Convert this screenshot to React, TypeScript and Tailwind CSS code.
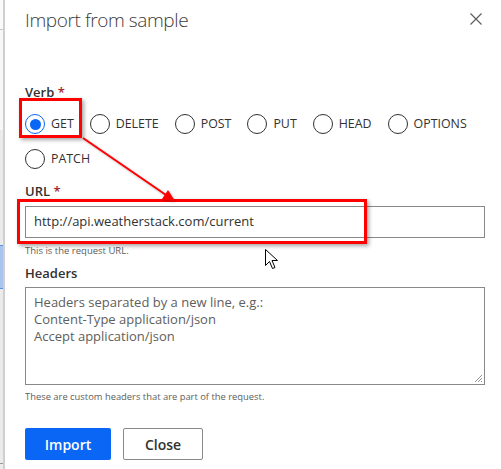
import React from "react";

const font = { fontFamily: '"Open Sans", "Noto Sans", "Liberation Sans", sans-serif' };

function Radio({ label, checked }: { label: string; checked?: boolean }) {
  return (
    <div className="flex items-center gap-[6px] h-[20px]">
      <span
        className={
          "w-[20px] h-[20px] rounded-full border flex items-center justify-center bg-white " +
          (checked ? "border-[#0a66f5]" : "border-[#323130]")
        }
      >
        {checked && <span className="w-[11px] h-[11px] rounded-full bg-[#0a66f5]" />}
      </span>
      <span className="text-[12.4px] leading-[20px] text-[#323130]">{label}</span>
    </div>
  );
}

export default function App() {
  return (
    <div className="relative w-[501px] h-[469px] flex bg-white overflow-hidden" style={font}>
      {/* background page strip */}
      <div className="w-[3px] flex flex-col shrink-0">
        <div className="h-[29px] bg-[#fafafa]" />
        <div className="h-[1px] bg-[#c8c8c8]" />
        <div className="h-[100px] bg-[#f7f7f7]" />
        <div className="h-[115px] bg-[#ebebeb]" />
        <div className="h-[44px] bg-[#a9c4ee] border-t border-b border-[#5a8fe0]" />
        <div className="flex-1 bg-[#ebebeb]" />
        <div className="h-[1px] bg-[#9a9a9a]" />
        <div className="h-[5px] bg-[#ebebeb]" />
      </div>
      <div className="w-[2px] shrink-0 bg-[#cfcfcf]" />

      {/* dialog */}
      <div className="flex-1 flex flex-col pl-[20px] pr-[16px]">
        <div className="flex items-start justify-between mt-[6px]">
          <h1 className="text-[19px] leading-[28px] font-light tracking-[-0.4px] text-[#3b3a39]">
            Import from sample
          </h1>
          <svg width="12" height="12" viewBox="0 0 12 12" className="mt-[7px] mr-[3px]">
            <path d="M0.5 0.5 L11.5 11.5 M11.5 0.5 L0.5 11.5" stroke="#605e5c" strokeWidth="1.2" />
          </svg>
        </div>

        <div className="mt-[48px] text-[13px] leading-[20px] font-semibold text-[#323130]">
          Verb <span className="text-[#a4262c]">*</span>
        </div>
        <div className="mt-[12px] flex flex-wrap gap-x-[16px] gap-y-[15px]">
          <Radio label="GET" checked />
          <Radio label="DELETE" />
          <Radio label="POST" />
          <Radio label="PUT" />
          <Radio label="HEAD" />
          <Radio label="OPTIONS" />
          <Radio label="PATCH" />
        </div>

        <div className="mt-[12px] text-[13px] leading-[20px] font-semibold text-[#323130]">
          URL <span className="text-[#a4262c]">*</span>
        </div>
        <div className="mt-[5px] h-[32px] border border-[#8a8886] flex items-center px-[8px] text-[13px] text-[#323130]">
          http://api.weatherstack.com/current
        </div>
        <div className="mt-[6px] text-[9.5px] leading-[14px] text-[#605e5c]">This is the request URL.</div>

        <div className="mt-[5px] text-[13px] leading-[20px] font-semibold text-[#323130]">Headers</div>
        <div className="relative mt-[4px] h-[98px] border border-[#8a8886] px-[8px] pt-[6px] text-[13px] leading-[17px] text-[#605e5c]">
          <div>Headers separated by a new line, e.g.:</div>
          <div>Content-Type application/json</div>
          <div>Accept application/json</div>
          <svg width="9" height="9" viewBox="0 0 9 9" className="absolute right-[1px] bottom-[1px]">
            <path d="M8 1 L1 8 M8 4 L4 8 M8 7 L7 8" stroke="#767676" strokeWidth="0.8" />
          </svg>
        </div>
        <div className="mt-[5px] text-[9.4px] leading-[14px] text-[#605e5c]">
          These are custom headers that are part of the request.
        </div>

        <div className="mt-[24px] flex gap-[12px]">
          <button className="w-[86px] h-[32px] rounded-[2px] bg-[#0a66f5] text-white text-[14px] font-semibold">
            Import
          </button>
          <button className="w-[80px] h-[32px] rounded-[2px] border border-[#8a8886] bg-white text-[#323130] text-[14px] font-semibold">
            Close
          </button>
        </div>
      </div>

      {/* annotations */}
      <div className="absolute left-[19px] top-[98px] w-[63px] h-[40px] border-[3px] border-[#ff0000] shadow-[2px_2px_4px_rgba(0,0,0,0.35)]" />
      <div className="absolute left-[17px] top-[199px] w-[350px] h-[45px] border-[3px] border-[#ff0000] shadow-[2px_2px_4px_rgba(0,0,0,0.35)]" />
      <svg className="absolute left-0 top-0 pointer-events-none" width="501" height="469">
        <defs>
          <filter id="sh" x="-10%" y="-10%" width="130%" height="130%">
            <feDropShadow dx="1" dy="1" stdDeviation="1" floodColor="#000" floodOpacity="0.3" />
          </filter>
        </defs>
        <g filter="url(#sh)">
          <line x1="83" y1="138" x2="166" y2="195" stroke="#ff0000" strokeWidth="2" />
          <path d="M175 201 L162 199 L168 190 Z" fill="#ff0000" />
        </g>
        {/* mouse cursor */}
        <path
          d="M265.5 249.5 L265.5 265.5 L269.5 261.5 L272.5 268.5 L275 267.5 L272 260.5 L277.5 260.5 Z"
          fill="#ffffff"
          stroke="#000000"
          strokeWidth="1"
        />
      </svg>
    </div>
  );
}
